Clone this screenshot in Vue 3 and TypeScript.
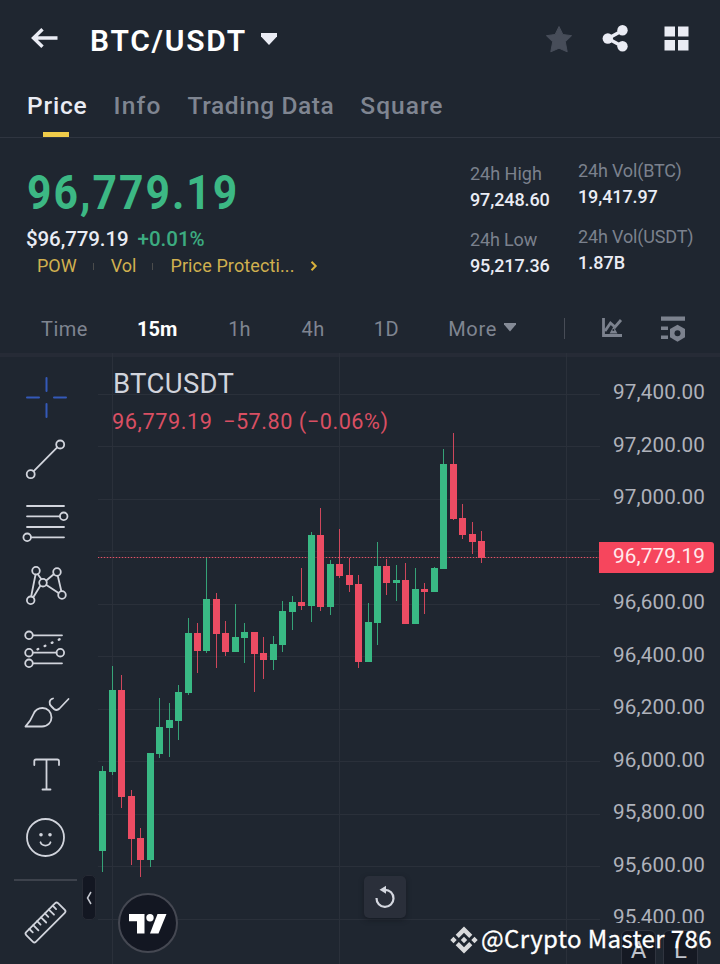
<script setup lang="ts">
interface Candle {
  x: number
  high: number
  top: number
  bottom: number
  low: number
  up: boolean
}

// Spreads the letters of an element so that its text takes the given width.
const vFit = {
  mounted(el: HTMLElement, binding: { value: number }) {
    const count = (el.textContent ?? '').length
    const natural = el.offsetWidth
    if (count && natural) el.style.letterSpacing = `${(binding.value - natural) / count}px`
  },
}

const tabs = [
  { label: 'Price', width: 60, active: true },
  { label: 'Info', width: 48, active: false },
  { label: 'Trading Data', width: 147, active: false },
  { label: 'Square', width: 83, active: false },
]

const stats = [
  [
    { label: '24h High', width: 72, value: '97,248.60', valueWidth: 80 },
    { label: '24h Low', width: 67, value: '95,217.36', valueWidth: 80 },
  ],
  [
    { label: '24h Vol(BTC)', width: 104, value: '19,417.97', valueWidth: 80 },
    { label: '24h Vol(USDT)', width: 115, value: '1.87B', valueWidth: 47 },
  ],
]

const grid = [394, 446, 499, 551, 604, 656, 709, 761, 814, 866, 919]
const axis = grid.map((_, i) => ({
  y: 399.3 + i * 52.5,
  text: (97400 - i * 200).toLocaleString('en-US') + '.00',
}))

// x, high, body top, body bottom, low, rising
const rows: [number, number, number, number, number, number][] = [
  [102, 766, 771, 851, 872, 1],
  [112, 666, 690, 772, 775, 1],
  [121, 675, 690, 797, 808, 0],
  [131, 790, 796, 839, 865, 0],
  [140, 828, 838, 860, 877, 0],
  [150, 753, 753, 860, 867, 1],
  [159, 698, 727, 754, 758, 1],
  [169, 703, 720, 728, 757, 1],
  [178, 685, 692, 721, 740, 1],
  [188, 618, 633, 693, 695, 1],
  [197, 623, 633, 651, 673, 0],
  [206, 558, 599, 651, 653, 1],
  [216, 593, 599, 634, 668, 0],
  [225, 621, 633, 652, 656, 0],
  [235, 604, 637, 652, 652, 1],
  [244, 623, 632, 638, 663, 1],
  [254, 632, 632, 654, 692, 0],
  [263, 637, 653, 660, 679, 0],
  [273, 636, 644, 660, 670, 1],
  [282, 601, 611, 645, 652, 1],
  [292, 596, 602, 612, 630, 1],
  [301, 568, 602, 606, 610, 0],
  [311, 532, 535, 606, 622, 1],
  [320, 508, 535, 607, 611, 0],
  [330, 560, 564, 607, 615, 1],
  [339, 529, 564, 576, 578, 0],
  [349, 558, 575, 585, 592, 0],
  [358, 575, 584, 662, 668, 0],
  [368, 603, 622, 662, 662, 1],
  [377, 542, 566, 623, 645, 1],
  [386, 559, 566, 583, 595, 0],
  [396, 565, 580, 583, 601, 1],
  [405, 563, 580, 624, 624, 0],
  [415, 568, 589, 624, 624, 1],
  [424, 583, 589, 592, 614, 0],
  [434, 567, 568, 592, 592, 1],
  [443, 449, 464, 569, 569, 1],
  [453, 433, 464, 519, 520, 0],
  [462, 504, 518, 535, 539, 0],
  [472, 522, 534, 542, 554, 0],
  [481, 531, 541, 558, 563, 0],
]
const candles: Candle[] = rows.map(([x, high, top, bottom, low, up]) => ({
  x, high, top, bottom, low, up: up === 1,
}))
</script>

<template>
  <main class="screen">
    <header class="header">
      <svg class="back" width="30" height="24" viewBox="0 0 30 24">
        <path d="M13.500 3.200 4.500 12l9 8.800M5 12H28.500" fill="none" stroke="#eaecf4" stroke-width="3.400" />
      </svg>
      <h1 class="pair" v-fit="157">BTC/USDT</h1>
      <svg class="pair-caret" width="18" height="14" viewBox="0 0 18 14">
        <path d="M1 1H17V4.500L9 13 1 4.500Z" fill="#eaecf4" />
      </svg>
      <div class="actions">
        <svg width="28" height="28" viewBox="0 0 28 28">
          <path d="m14 1.500 3.900 8 8.700 1.200-6.300 6.100 1.900 10L14 23.200 5.800 26.800l1.900-10L1.400 10.700l8.700-1.200Z" fill="#474d59" stroke="#474d59" stroke-linejoin="round" />
        </svg>
        <svg width="28" height="28" viewBox="0 0 28 28">
          <path d="M20.500 5.500 6 13.500 20.500 21.500" fill="none" stroke="#eaecf4" stroke-width="3.400" />
          <g fill="#eaecf4"><circle cx="20.500" cy="5.300" r="5.200" /><circle cx="5.800" cy="13.500" r="5.200" /><circle cx="20.500" cy="21.300" r="5.200" /></g>
        </svg>
        <svg width="28" height="28" viewBox="0 0 28 28">
          <path d="M1.500 1.500H12V11.500H1.500ZM15 1.500H25.500V11.500H15ZM1.500 15H12V25.500H1.500ZM15 15H25.500V25.500H15Z" fill="#eaecf4" />
        </svg>
      </div>
    </header>

    <nav class="tabs">
      <div v-for="t in tabs" :key="t.label" class="tab" :class="{ active: t.active }">
        <span v-fit="t.width">{{ t.label }}</span>
      </div>
    </nav>

    <section class="summary">
      <div class="quote">
        <div class="last"><span v-fit="244">96,779.19</span></div>
        <div class="sub">
          <span class="fiat" v-fit="103">$96,779.19</span>
          <span class="change" v-fit="67">+0.01%</span>
        </div>
        <div class="tags">
          <span v-fit="40">POW</span><i></i>
          <span v-fit="26">Vol</span><i></i>
          <span class="protect" v-fit="124">Price Protecti...</span>
          <svg width="8" height="12" viewBox="0 0 8 12"><path d="M1.500 1.800 5.700 6 1.500 10.200" fill="none" stroke="#d8b13c" stroke-width="2" /></svg>
        </div>
      </div>
      <div v-for="(col, i) in stats" :key="i" class="stats" :class="{ raised: i === 1 }">
        <dl v-for="s in col" :key="s.label">
          <dt><span v-fit="s.width">{{ s.label }}</span></dt>
          <dd><span v-fit="s.valueWidth">{{ s.value }}</span></dd>
        </dl>
      </div>
    </section>

    <nav class="intervals">
      <span class="time" v-fit="47">Time</span>
      <span class="m15" v-fit="40">15m</span>
      <span class="h1" v-fit="22">1h</span>
      <span class="h4" v-fit="23">4h</span>
      <span class="d1" v-fit="25">1D</span>
      <span class="more" v-fit="49">More</span>
      <svg class="more-caret" width="12" height="9" viewBox="0 0 12 9"><path d="M0 0H12V1.500L6 8.500 0 1.500Z" fill="#848a96" /></svg>
      <i class="rule"></i>
      <svg class="style-icon" width="22" height="22" viewBox="0 0 22 22">
        <g fill="none" stroke="#7c828e" stroke-width="2.800">
          <path d="M2.500 1V18.500H21" />
          <path d="m4 14 5.500-8 4.500 4L20 3" />
        </g>
        <path d="m12.500 9.500-4 7h8Z" fill="#7c828e" />
        <circle cx="12.400" cy="13" r="1" fill="#1f2630" />
      </svg>
      <svg class="settings-icon" width="26" height="28" viewBox="0 0 26 28">
        <path d="M1 1.500H25V5.800H1ZM1 11.500H8V15H1ZM1 20.500H8V24H1Z" fill="#7c828e" />
        <path d="M17.500 9.700 25 13.900V22.300L17.500 26.700 10 22.300V13.900Z" fill="#7c828e" />
        <circle cx="17.500" cy="18.200" r="3" fill="#1f2630" />
      </svg>
    </nav>

    <section class="workspace">
      <aside class="tools">
        <svg viewBox="0 0 92 63"><path d="M46.500 12V25M46.500 38V51M27 31.500H39M54 31.500H66" stroke="#3459b8" stroke-width="2" /></svg>
        <svg viewBox="0 0 92 63"><path d="M33.500 42.300 57.200 18.400" /><circle cx="30.700" cy="45.200" r="4" /><circle cx="60.200" cy="15.500" r="4" /></svg>
        <svg viewBox="0 0 92 63"><path d="M27 14H64M27 24.300H60M27 35H64M31 45.300H64" /><circle cx="63.700" cy="24.300" r="3.800" /><circle cx="27.200" cy="45.300" r="3.800" /></svg>
        <svg viewBox="0 0 92 63"><path d="M31.200 41.300 35.500 19.700M37.800 19.300 41.200 24.100M46.300 25.500 53.700 19.200M57.800 21 61.300 36M58.600 38 46.400 30M40.300 30.700 33.300 42.200" /><circle cx="36" cy="15.700" r="3.800" /><circle cx="57" cy="17" r="3.800" /><circle cx="43" cy="27.700" r="3.800" /><circle cx="62" cy="40" r="3.800" /><circle cx="30.700" cy="45.300" r="3.800" /></svg>
        <svg viewBox="0 0 92 63"><path d="M33 17.300H62M33 34.700H56.500M33 45.300H62" /><path d="M37.500 31.300 62 20.200" stroke-dasharray="0.800 7" stroke-width="2.400" /><circle cx="29" cy="17.300" r="3.800" /><circle cx="29" cy="34.700" r="3.800" /><circle cx="60.300" cy="34.700" r="3.800" /><circle cx="29" cy="45.300" r="3.800" /></svg>
        <svg viewBox="0 0 92 63"><path d="M25.500 45.500H42C48 45.500 51.500 41 51.500 36.500 51.500 31 47.500 27 42.500 27 38 27 35 29.500 33.500 33 31.500 38 30 41 25.500 45.500Z" /><path d="M53 17.500C49 18.500 48.500 23 51.500 25.500L54 28C56 29.500 58 29 59.500 27.500L68.500 18" /></svg>
        <svg viewBox="0 0 92 63"><path d="M34.300 21V17.200Q34.300 15.500 36 15.500H57.300Q59 15.500 59 17.200V21M46.500 15.500V45.500M42.500 45.500H50.500" /></svg>
        <svg viewBox="0 0 92 63"><circle cx="45.500" cy="30.500" r="18.500" /><path d="M40.500 35.300C42 39.600 49 39.600 50.500 35.300" /><g class="dots"><circle cx="41" cy="27.700" r="1.800" /><circle cx="50" cy="27.700" r="1.800" /></g></svg>
        <i class="divider"></i>
        <svg viewBox="0 0 92 63"><g transform="rotate(-45 45.500 31.500)"><rect x="23" y="24.700" width="45" height="13.600" rx="2" /><path d="M29.500 24.700V29.500M35 24.700V32M40.500 24.700V29.500M46 24.700V32M51.500 24.700V29.500M57 24.700V32M62.500 24.700V29.500" /></g></svg>
      </aside>

      <div class="chart">
        <svg class="plot" width="622" height="611" viewBox="98 353 622 611">
          <g class="grid">
            <rect v-for="y in grid" :key="y" x="98" :y="y" width="502" height="1" />
            <rect v-for="x in [112, 339, 566]" :key="x" :x="x" y="353" width="1" height="611" />
          </g>
          <path d="M98 557.500H599" stroke="#f6465d" stroke-opacity="0.25" />
          <path d="M98 557.500H599" stroke="#e0566a" stroke-dasharray="1 2" />
          <g v-for="c in candles" :key="c.x" :class="c.up ? 'up' : 'down'">
            <rect :x="c.x" :y="c.high" width="1" :height="c.low - c.high" opacity="0.85" />
            <rect :x="c.x - 3" :y="c.top" width="7" :height="c.bottom - c.top" />
          </g>
          <text x="113" y="392.500" class="symbol" textLength="121">BTCUSDT</text>
          <text x="112" y="429" class="delta" textLength="100">96,779.19</text>
          <text x="223" y="429" class="delta" textLength="165">−57.80 (−0.06%)</text>
          <text v-for="a in axis" :key="a.y" x="613" :y="a.y" class="price" textLength="92">{{ a.text }}</text>
          <rect x="606" y="923" width="114" height="41" fill="#1f2630" />
          <path d="M599 542H711Q714 542 714 545V570Q714 573 711 573H599Z" fill="#f6465d" />
          <text x="613" y="563" class="price current" textLength="92">96,779.19</text>
        </svg>
        <button class="logo">
          <svg width="38" height="20" viewBox="0 0 38 20" fill="#fff"><path d="M0 0H15.500V19.500H8V7.300H0Z" /><circle cx="21" cy="3.700" r="3.700" /><path d="M28.500 0H37.500L29.500 19.500H21Z" /></svg>
        </button>
        <button class="reset">
          <svg width="22" height="24" viewBox="0 0 22 24"><path d="M2.500 13A8.500 8.500 0 1 0 11 4.800" fill="none" stroke="#d5d8e0" stroke-width="2.200" /><path d="M5.500 4.800 12 .8V8.800Z" fill="#d5d8e0" /></svg>
        </button>
        <div class="scale"><button>A</button><button>L</button></div>
      </div>
      <button class="collapse">
        <svg width="6" height="14" viewBox="0 0 6 14"><path d="M5 1 1.500 7 5 13" fill="none" stroke="#c5c8d0" stroke-width="1.500" /></svg>
      </button>
    </section>

    <div class="watermark">
      <svg width="28" height="28" viewBox="0 0 28 28" fill="#d9dadc">
        <path d="M14 .5 22.300 8.800 19.200 11.900 14 6.700 8.800 11.900 5.700 8.800ZM14 27.500 5.700 19.200 8.800 16.100 14 21.300 19.200 16.100 22.300 19.200ZM3.500 10.800 6.700 14 3.500 17.200.3 14ZM24.500 10.800 27.700 14 24.500 17.200 21.300 14ZM14 10.800 17.200 14 14 17.200 10.800 14Z" />
      </svg>
      <span v-fit="231">@Crypto Master 786</span>
    </div>
  </main>
</template>

<style>
body {
  background: #1f2630;
}
</style>

<style scoped>
.screen {
  position: relative;
  width: 720px;
  height: 964px;
  overflow: hidden;
  background: #1f2630;
  color: #eaecf4;
  font-family: Roboto, "Liberation Sans", sans-serif;
  white-space: nowrap;
}
span, h1 { flex: none; }
svg { display: block; flex: none; }
button { padding: 0; font: inherit; color: inherit; }

.header {
  display: flex;
  align-items: center;
  height: 81px;
  padding: 0 29px;
  box-sizing: border-box;
}
.back { margin-bottom: 5px; }
.pair {
  margin: 0 0 0 31px;
  color: #fff;
  font-size: 30px;
  font-weight: 600;
  line-height: 40px;
}
.pair-caret { margin: 0 0 3px 13px; }
.actions {
  display: flex;
  gap: 0 29px;
  margin: 0 0 3px auto;
}
.actions svg:last-child { margin-left: 4px; }

.tabs {
  display: flex;
  gap: 26px;
  height: 57px;
  padding-left: 27px;
  box-sizing: border-box;
  border-bottom: 1px solid #2f3540;
}
.tab {
  position: relative;
  color: #7f8591;
  font-size: 24.5px;
  font-weight: 500;
  line-height: 50px;
}
.tab span, .last span, dt span, dd span { display: inline-block; }
.tab.active { color: #eaecf4; }
.tab.active::after {
  content: "";
  position: absolute;
  left: 16px;
  bottom: 0;
  width: 26px;
  height: 5px;
  background: #f0cc4a;
}

.summary {
  display: flex;
  height: 167px;
  padding-left: 27px;
}
.quote { width: 443px; padding-top: 27px; }
.last {
  height: 56px;
  color: #3cb884;
  font-size: 49px;
  font-weight: 700;
  line-height: 56px;
}
.last span { transform: scaleX(0.87); transform-origin: 0 50%; }
.sub {
  display: flex;
  gap: 9px;
  font-size: 20.5px;
  font-weight: 500;
  line-height: 36px;
}
.fiat { margin-left: -1px; }
.change { color: #3cab80; }
.tags {
  display: flex;
  align-items: center;
  padding-left: 10px;
  color: #d0b04f;
  font-size: 18px;
  line-height: 18px;
}
.tags i { width: 1px; height: 7px; margin: 0 17px 0 16px; background: #4b4c4c; }
.tags svg { margin-left: 15px; }

.stats { width: 108px; padding-top: 25px; }
.stats.raised { padding-top: 22px; }
dl { margin: 0 0 14px; line-height: 26px; }
dt { height: 26px; color: #7b818d; font-size: 18px; margin: -2px 0 0; }
dd { height: 26px; margin: 0; font-size: 18px; font-weight: 500; }
dl + dl { margin-top: 16px; }

.intervals {
  display: flex;
  align-items: center;
  height: 48px;
  padding-left: 41px;
  color: #7f8591;
  font-size: 20px;
}
.m15 { margin-left: 49px; color: #fff; font-weight: 700; }
.h1 { margin-left: 51px; }
.h4 { margin-left: 51px; }
.d1 { margin-left: 49px; }
.more { margin-left: 49px; }
.more-caret { margin: 0 0 3px 7px; }
.rule { width: 1px; height: 21px; margin: 0 36px 2px 48px; background: #474c56; }
.style-icon { margin-bottom: 3px; }
.settings-icon { margin-left: 37px; }

.workspace {
  position: relative;
  display: flex;
  height: 611px;
}
.workspace::before {
  content: "";
  position: absolute;
  inset: 0 0 auto;
  height: 4px;
  background: #262b36;
}
.tools { width: 98px; padding-top: 13px; box-sizing: border-box; }
.tools svg {
  width: 92px;
  height: 63px;
  fill: none;
  stroke: #d1d4dc;
  stroke-width: 1.8;
  stroke-linecap: round;
  stroke-linejoin: round;
}
.tools .dots { fill: #d1d4dc; stroke: none; }
.divider {
  display: block;
  width: 63px;
  height: 2px;
  margin: 9px 0 10px 14px;
  background: #3d424c;
}
.chart { position: relative; width: 622px; }
.grid { fill: #2a303a; }
.up { fill: #39b984; }
.down { fill: #ec4c63; }
.symbol { fill: #d1d4dc; font-size: 27.5px; }
.delta { fill: #d94f63; font-size: 21.7px; }
.price { fill: #afb2bb; font-size: 20.7px; }
.price.current { fill: #ffe9ec; }

.logo, .reset, .collapse {
  position: absolute;
  display: flex;
  align-items: center;
  justify-content: center;
  box-sizing: border-box;
}
.logo {
  left: 20px;
  top: 540px;
  width: 60px;
  height: 60px;
  border: 2px solid #454852;
  border-radius: 50%;
  background: #131722;
}
.logo svg { margin-top: 2px; }
.reset {
  left: 266px;
  top: 523px;
  width: 42px;
  height: 42px;
  border: 0;
  border-radius: 5px;
  background: #2a2f3a;
  box-shadow: 0 2px 5px #12161d99;
}
.collapse {
  left: 82px;
  top: 522px;
  width: 14px;
  height: 45px;
  border: 1px solid #262a34;
  border-radius: 5px;
  background: #131722;
}
.scale {
  position: absolute;
  left: 523px;
  top: 577px;
  display: flex;
  gap: 7px;
}
.scale button {
  width: 35px;
  height: 40px;
  border: 1px solid #30343f;
  border-radius: 6px;
  background: #151923;
  color: #bfc2cb;
  font-size: 24px;
  line-height: 34px;
}
.watermark {
  position: absolute;
  left: 450px;
  top: 924px;
  display: flex;
  align-items: center;
  gap: 3px;
  color: #fff;
  font-family: "Noto Sans CJK SC", sans-serif;
  font-size: 24px;
  font-weight: 400;
  line-height: 32px;
  -webkit-text-stroke: 0.3px #fff;
}
.watermark span { margin: -2px 0 2px; }
</style>
